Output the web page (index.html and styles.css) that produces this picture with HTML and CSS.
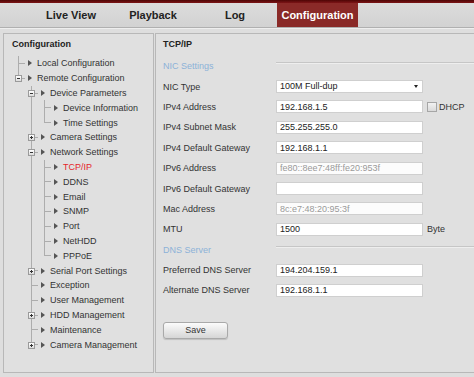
FILE: index.html
```html
<!DOCTYPE html>
<html lang="en">

<head>
  <meta charset="utf-8">
  <title>Configuration - TCP/IP</title>
  <link rel="stylesheet" href="styles.css">
</head>

<body>
  <!-- Top Menu Start -->
  <div class="top-strip"></div>
  <div class="menu-bar">
    <a class="menu-item">Live View</a>
    <a class="menu-item">Playback</a>
    <a class="menu-item">Log</a>
    <a class="menu-item active">Configuration</a>
  </div>
  <!-- Top Menu End -->

  <div class="page">
    <!-- Side Tree -->
    <div class="side-panel">
      <h3 class="side-title">Configuration</h3>
      <ul class="tree">
        <li><div class="node"><span class="joint"></span><span class="arrow"></span>Local Configuration</div></li>
        <li>
          <div class="node"><span class="joint"><i class="toggle minus"></i></span><span class="arrow"></span>Remote Configuration</div>
          <ul>
            <li>
              <div class="node"><span class="joint"><i class="toggle minus"></i></span><span class="arrow"></span>Device Parameters</div>
              <ul>
                <li><div class="node"><span class="joint"></span><span class="arrow"></span>Device Information</div></li>
                <li><div class="node"><span class="joint"></span><span class="arrow"></span>Time Settings</div></li>
              </ul>
            </li>
            <li><div class="node"><span class="joint"><i class="toggle plus"></i></span><span class="arrow"></span>Camera Settings</div></li>
            <li>
              <div class="node"><span class="joint"><i class="toggle minus"></i></span><span class="arrow"></span>Network Settings</div>
              <ul>
                <li><div class="node current"><span class="joint"></span><span class="arrow"></span>TCP/IP</div></li>
                <li><div class="node"><span class="joint"></span><span class="arrow"></span>DDNS</div></li>
                <li><div class="node"><span class="joint"></span><span class="arrow"></span>Email</div></li>
                <li><div class="node"><span class="joint"></span><span class="arrow"></span>SNMP</div></li>
                <li><div class="node"><span class="joint"></span><span class="arrow"></span>Port</div></li>
                <li><div class="node"><span class="joint"></span><span class="arrow"></span>NetHDD</div></li>
                <li><div class="node"><span class="joint"></span><span class="arrow"></span>PPPoE</div></li>
              </ul>
            </li>
            <li><div class="node"><span class="joint"><i class="toggle plus"></i></span><span class="arrow"></span>Serial Port Settings</div></li>
            <li><div class="node"><span class="joint"></span><span class="arrow"></span>Exception</div></li>
            <li><div class="node"><span class="joint"></span><span class="arrow"></span>User Management</div></li>
            <li><div class="node"><span class="joint"><i class="toggle plus"></i></span><span class="arrow"></span>HDD Management</div></li>
            <li><div class="node"><span class="joint"></span><span class="arrow"></span>Maintenance</div></li>
            <li><div class="node"><span class="joint"><i class="toggle plus"></i></span><span class="arrow"></span>Camera Management</div></li>
          </ul>
        </li>
      </ul>
    </div>

    <!-- Main Content -->
    <div class="main-panel">
      <h3 class="main-title">TCP/IP</h3>

      <div class="form-grid">
        <span class="section-label">NIC Settings</span>
        <span class="section-rule"></span>

        <label for="nicType">NIC Type</label>
        <span class="select-wrap">
          <select id="nicType">
            <option>100M Full-dup</option>
          </select>
        </span>
        <span></span>

        <label for="ipv4">IPv4 Address</label>
        <input type="text" id="ipv4" value="192.168.1.5">
        <span class="check-wrap"><input type="checkbox" id="dhcp"><label for="dhcp">DHCP</label></span>

        <label for="mask">IPv4 Subnet Mask</label>
        <input type="text" id="mask" value="255.255.255.0">
        <span></span>

        <label for="gateway">IPv4 Default Gateway</label>
        <input type="text" id="gateway" value="192.168.1.1">
        <span></span>

        <label for="ipv6">IPv6 Address</label>
        <input type="text" id="ipv6" value="fe80::8ee7:48ff:fe20:953f" disabled>
        <span></span>

        <label for="ipv6Gateway">IPv6 Default Gateway</label>
        <input type="text" id="ipv6Gateway" value="">
        <span></span>

        <label for="mac">Mac Address</label>
        <input type="text" id="mac" value="8c:e7:48:20:95:3f" disabled>
        <span></span>

        <label for="mtu">MTU</label>
        <input type="text" id="mtu" value="1500">
        <span class="unit">Byte</span>

        <span class="section-label">DNS Server</span>
        <span class="section-rule"></span>

        <label for="dns1">Preferred DNS Server</label>
        <input type="text" id="dns1" value="194.204.159.1">
        <span></span>

        <label for="dns2">Alternate DNS Server</label>
        <input type="text" id="dns2" value="192.168.1.1">
        <span></span>
      </div>

      <button class="save-btn">Save</button>
    </div>
  </div>
</body>

</html>
```

FILE: styles.css
```css
/* Global */
html,
body {
  overflow: hidden;
}

body {
  margin: 0;
  background-color: #dedede;
  font-family: "Liberation Sans", Arial, sans-serif;
  font-size: 9px;
  color: #333;
}

/* Top menu */
.top-strip {
  height: 3px;
  background: linear-gradient(to bottom, #4e0606, #7c1416);
}

.menu-bar {
  display: flex;
  height: 24px;
  padding-left: 30px;
  background: linear-gradient(to bottom, #dcdcdc, #d2d2d2);
  border-bottom: 1px solid #b0b0b0;
  box-shadow: 0 1px 0 #eeeeee;
}

.menu-item {
  width: 82px;
  line-height: 24px;
  text-align: center;
  font-size: 11px;
  font-weight: bold;
  color: #222;
}

.menu-item.active {
  width: 81px;
  margin-left: 1px;
  background-color: #8a2a28;
  color: #fff;
}

/* Page layout */
.page {
  display: flex;
  padding: 5px 0 0 3px;
}

.side-panel,
.main-panel {
  box-sizing: border-box;
  height: 340px;
  background-color: #e0e0e0;
  border: 1px solid #b8b8b8;
}

.side-panel {
  width: 151px;
  flex: none;
  padding-left: 8px;
}

.main-panel {
  flex: 1;
  margin: 0 -4px 0 1px;
  padding-left: 7px;
}

/* Side tree */
.side-title {
  margin: 0;
  height: 22px;
  line-height: 20px;
  font-size: 9px;
  font-weight: bold;
  color: #222;
}

.tree,
.tree ul {
  list-style: none;
  margin: 0;
  padding: 0;
}

.tree ul {
  padding-left: 13px;
}

.tree li {
  position: relative;
}

/* vertical connector line */
.tree li::before {
  content: "";
  position: absolute;
  left: 6px;
  top: 0;
  bottom: 0;
  border-left: 1px solid #adadad;
}

.tree li:last-child::before {
  bottom: auto;
  height: 7px;
}

.node {
  display: flex;
  align-items: center;
  height: 14.8px;
  white-space: nowrap;
}

.node.current {
  color: #e5262b;
}

.joint {
  position: relative;
  display: flex;
  align-items: center;
  width: 13px;
  height: 100%;
  flex: none;
}

/* horizontal connector line */
.joint::before {
  content: "";
  position: absolute;
  left: 6px;
  right: 0;
  top: 7px;
  border-top: 1px solid #adadad;
}

.toggle {
  position: relative;
  z-index: 1;
  box-sizing: border-box;
  width: 7px;
  height: 7px;
  margin: 1px 0 0 3px;
  border: 1px solid #9a9a9a;
  background: linear-gradient(to bottom, #ffffff, #dcdcdc);
}

.toggle::before,
.toggle.plus::after {
  content: "";
  position: absolute;
  background-color: #333;
}

.toggle::before {
  left: 1px;
  top: 2px;
  width: 3px;
  height: 1px;
}

.toggle.plus::after {
  left: 2px;
  top: 1px;
  width: 1px;
  height: 3px;
}

.arrow {
  width: 0;
  height: 0;
  margin: 0 5px 0 3px;
  border-top: 3px solid transparent;
  border-bottom: 3px solid transparent;
  border-left: 4px solid #555;
}

/* Main form */
.main-title {
  margin: 0;
  height: 22px;
  line-height: 20px;
  font-size: 9px;
  font-weight: bold;
  color: #222;
}

.form-grid {
  display: grid;
  grid-template-columns: 109px 147px 1fr;
  grid-auto-rows: 20.4px;
  column-gap: 4px;
  align-items: center;
}

.form-grid > label {
  color: #333;
}

.section-label {
  color: #8cb2d8;
}

.section-rule {
  grid-column: 2 / -1;
  margin-top: -6px;
  border-top: 1px solid #c6c6c6;
  border-bottom: 1px solid #eeeeee;
}

.form-grid input[type="text"],
.form-grid select {
  box-sizing: border-box;
  width: 147px;
  height: 13px;
  margin: 0;
  padding: 0 3px;
  border: 1px solid #cfcfcf;
  background-color: #fff;
  font-family: inherit;
  font-size: 9px;
  color: #222;
  outline: none;
}

.form-grid input[disabled] {
  color: #9a9a9a;
  background-color: #fcfcfc;
}

.select-wrap {
  position: relative;
  display: block;
  height: 13px;
}

.form-grid select {
  appearance: none;
  -webkit-appearance: none;
  border-radius: 0;
  line-height: 11px;
}

.select-wrap::after {
  content: "";
  position: absolute;
  right: 5px;
  top: 5px;
  border-left: 2px solid transparent;
  border-right: 2px solid transparent;
  border-top: 3px solid #222;
}

.check-wrap {
  display: flex;
  align-items: center;
}

.check-wrap input {
  appearance: none;
  -webkit-appearance: none;
  box-sizing: border-box;
  width: 10px;
  height: 10px;
  margin: 0 2px 0 0;
  border: 1px solid #a6a6a6;
  background: linear-gradient(to bottom, #f2f2f2, #dadada);
}

.check-wrap label,
.unit {
  color: #333;
}

/* Save button */
.save-btn {
  display: block;
  width: 65px;
  height: 17px;
  margin-top: 21px;
  padding: 0;
  border: 1px solid #a9a9a9;
  border-radius: 3px;
  background: linear-gradient(to bottom, #fbfbfb, #d6d6d6);
  box-shadow: 0 1px 1px rgba(0, 0, 0, 0.15);
  font-family: inherit;
  font-size: 9px;
  color: #333;
  cursor: pointer;
}
```
